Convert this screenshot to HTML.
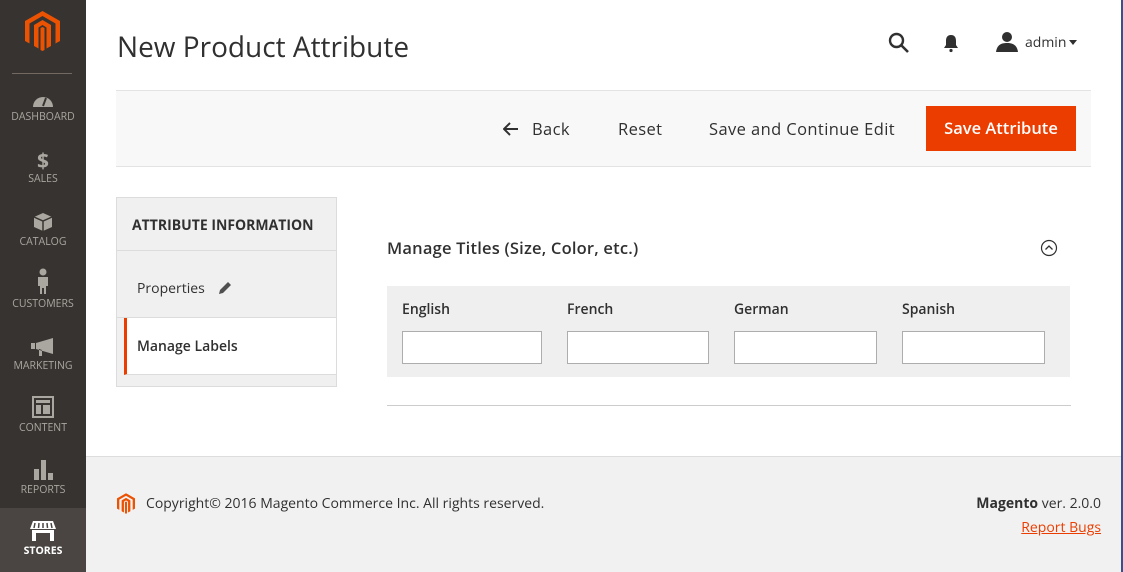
<!DOCTYPE html>
<html><head><meta charset="utf-8"><style>
*{box-sizing:border-box;margin:0;padding:0}
body{width:1123px;height:572px;overflow:hidden;background:#fff;font-family:"Open Sans","Liberation Sans",sans-serif;color:#303030;position:relative}
.side{position:absolute;left:0;top:0;width:86px;height:572px;background:#373330}
.side .sep{position:absolute;left:12px;top:73px;width:60px;height:1px;background:#736963}
.item{position:absolute;left:0;width:86px;text-align:center;color:#aaa6a0;font-size:10.5px}
.item svg{display:block;margin:0 auto 3px}
.item.act{background:#4a4542;color:#fff;height:64px;top:508px;padding-top:13px}
.main{position:absolute;left:86px;top:0;width:1035px;height:572px}
h1{position:absolute;left:31px;top:28px;font-size:28px;font-weight:400;color:#303030}
.bar{position:absolute;left:30px;top:90px;width:975px;height:77px;background:#f8f8f8;border-top:1px solid #e3e3e3;border-bottom:1px solid #e3e3e3}
.bar span{position:absolute;top:26px;font-size:16.5px;color:#303030;letter-spacing:.4px}
.btn{position:absolute;left:810px;top:15px;width:150px;height:45px;background:#eb3d00;color:#fff;font-size:16.5px;font-weight:600;text-align:center;line-height:44px}
.tabs{position:absolute;left:30px;top:197px;width:221px;height:190px;background:#f0f0f0;border:1px solid #dcdcdc}
.tabs .hd{height:53px;border-bottom:1px solid #dcdcdc;font-weight:700;font-size:14px;padding:18px 15px;color:#303030}
.tabs .p{height:67px;padding:28px 20px;font-size:14px;border-bottom:1px solid #dcdcdc}
.tabs .m{height:57px;margin-left:7px;background:#fff;border-left:3px solid #eb3d00;padding:19px 10px;font-size:14px;font-weight:600;border-bottom:1px solid #dcdcdc}
.sec{position:absolute;left:301px;top:236px;font-size:16.5px;font-weight:600;color:#303030;letter-spacing:.2px}
.grid{position:absolute;left:301px;top:286px;width:683px;height:91px;background:#efefef}
.grid label{position:absolute;top:14px;font-size:14px;font-weight:600;color:#303030}
.grid input{position:absolute;top:45px;height:33px;border:1px solid #adadad;background:#fff}
.hr{position:absolute;left:301px;top:405px;width:684px;height:1px;background:#ccc}
.foot{position:absolute;left:0;top:456px;width:1035px;height:116px;background:#f1f1f1;border-top:1px solid #ddd}
.rb{position:absolute;right:0;top:0;width:2px;height:572px;background:#3b4f8f}
</style></head><body>
<div class="side">
 <svg style="position:absolute;left:25px;top:11px" width="35" height="40" viewBox="0 0 35 40"><path d="M17.5 0 L35 10 V30 L30.5 32.5 V12.5 L17.5 5 L4.5 12.5 V32.5 L0 30 V10 Z M17.5 9 L26 14 V35 L21.5 37.5 V16.5 L17.5 14 L13.5 16.5 V37.5 L9 35 V14 Z" fill="#eb5202"/><path d="M15.5 17 L17.5 16 L19.5 17 V39 L17.5 40 L15.5 39 Z" fill="#eb5202"/></svg>
 <div class="sep"></div>
 <div class="item" style="top:93px"><svg width="22" height="14" viewBox="0 0 22 14"><path d="M1 14 A10 10 0 0 1 21 14 Z" fill="#aaa6a0"/><path d="M11 13 L14 5" stroke="#373330" stroke-width="2"/></svg>DASHBOARD</div>
 <div class="item" style="top:150px"><div style="font-size:21px;font-weight:700;line-height:22px;color:#aaa6a0">$</div>SALES</div>
 <div class="item" style="top:212px"><svg width="20" height="20" viewBox="0 0 20 20"><path d="M10 1 L19 5 V15 L10 19 L1 15 V5 Z" fill="#aaa6a0"/><path d="M1 5 L10 9 L19 5 M10 9 V19" stroke="#373330" stroke-width="1.5" fill="none"/></svg>CATALOG</div>
 <div class="item" style="top:268px"><svg width="14" height="26" viewBox="0 0 14 26"><circle cx="7" cy="4" r="3.5" fill="#aaa6a0"/><path d="M2 9 H12 V18 L10 18 V26 H8 V20 H6 V26 H4 V18 H2 Z" fill="#aaa6a0"/></svg>CUSTOMERS</div>
 <div class="item" style="top:338px"><svg width="24" height="18" viewBox="0 0 24 18"><rect x="0" y="5" width="4" height="6" fill="#aaa6a0"/><path d="M5 5 L22 0 V16 L5 11 Z M8 11 V18 H11 V12" fill="#aaa6a0"/></svg>MARKETING</div>
 <div class="item" style="top:396px"><svg width="22" height="22" viewBox="0 0 22 22"><rect x="1" y="1" width="20" height="20" fill="none" stroke="#aaa6a0" stroke-width="2"/><rect x="4" y="4" width="14" height="3" fill="#aaa6a0"/><rect x="4" y="9" width="5" height="9" fill="#aaa6a0"/><rect x="11" y="9" width="7" height="9" fill="#aaa6a0"/></svg>CONTENT</div>
 <div class="item" style="top:460px"><svg width="22" height="20" viewBox="0 0 22 20"><rect x="2" y="9" width="5" height="11" fill="#aaa6a0"/><rect x="9" y="0" width="5" height="20" fill="#aaa6a0"/><rect x="16" y="13" width="5" height="7" fill="#aaa6a0"/></svg>REPORTS</div>
 <div class="item act"><svg width="26" height="20" viewBox="0 0 26 20"><path d="M3 0 H23 L26 8 H0 Z" fill="#fff"/><path d="M5 2 L4 7 M9 2 L8.5 7 M13 2 V7 M17 2 L17.5 7 M21 2 L22 7" stroke="#4a4542" stroke-width="1.5"/><rect x="2" y="9" width="22" height="11" fill="#fff"/><rect x="6" y="12" width="14" height="8" fill="#4a4542"/></svg><b>STORES</b></div>
</div>
<div class="main">
 <h1>New Product Attribute</h1>
 <svg style="position:absolute;left:802px;top:32px" width="22" height="22" viewBox="0 0 22 22"><circle cx="8.5" cy="8.5" r="6.5" fill="none" stroke="#303030" stroke-width="2.4"/><path d="M13.5 13.5 L20 20" stroke="#303030" stroke-width="2.6"/></svg>
 <svg style="position:absolute;left:857px;top:34px" width="16" height="19" viewBox="0 0 16 19"><path d="M8 1 C4 1 3 4 3 7 V11 L1 14 H15 L13 11 V7 C13 4 12 1 8 1 Z" fill="#303030"/><circle cx="8" cy="16.5" r="1.6" fill="#303030"/></svg>
 <svg style="position:absolute;left:910px;top:31px" width="22" height="21" viewBox="0 0 22 21"><circle cx="11" cy="6" r="5" fill="#303030"/><path d="M0 21 C1 14 5 12 11 12 C17 12 21 14 22 21 Z" fill="#303030"/></svg>
 <div style="position:absolute;left:939px;top:33px;font-size:14px;color:#303030">admin</div>
 <div style="position:absolute;left:983px;top:40px;border:4px solid transparent;border-top:5px solid #303030"></div>
 <div class="bar">
  <svg style="position:absolute;left:387px;top:31px" width="16" height="14" viewBox="0 0 16 14"><path d="M15 7 H2 M7 1 L1 7 L7 13" stroke="#303030" stroke-width="2" fill="none"/></svg>
  <span style="left:416px">Back</span><span style="left:502px">Reset</span><span style="left:593px">Save and Continue Edit</span>
  <div class="btn">Save Attribute</div>
 </div>
 <div class="tabs">
  <div class="hd">ATTRIBUTE INFORMATION</div>
  <div class="p">Properties <svg style="margin-left:10px;vertical-align:-2px" width="14" height="14" viewBox="0 0 14 14"><path d="M1 13 L2 9 L10 1 L13 4 L5 12 Z" fill="#505050"/></svg></div>
  <div class="m">Manage Labels</div>
 </div>
 <div class="sec">Manage Titles (Size, Color, etc.)</div>
 <svg style="position:absolute;left:954px;top:239px" width="18" height="18" viewBox="0 0 18 18"><circle cx="9" cy="9" r="7.5" fill="none" stroke="#303030" stroke-width="1.2"/><path d="M5.5 10.5 L9 7 L12.5 10.5" fill="none" stroke="#303030" stroke-width="1.3"/></svg>
 <div class="grid">
  <label style="left:15px">English</label><label style="left:180px">French</label><label style="left:347px">German</label><label style="left:515px">Spanish</label>
  <input style="left:15px;width:140px"><input style="left:180px;width:142px"><input style="left:347px;width:143px"><input style="left:515px;width:143px">
 </div>
 <div class="hr"></div>
 <div class="foot">
  <svg style="position:absolute;left:31px;top:36px" width="18" height="21" viewBox="0 0 35 40"><path d="M17.5 0 L35 10 V30 L30.5 32.5 V12.5 L17.5 5 L4.5 12.5 V32.5 L0 30 V10 Z M17.5 9 L26 14 V35 L21.5 37.5 V16.5 L17.5 14 L13.5 16.5 V37.5 L9 35 V14 Z" fill="#eb5202"/><path d="M15.5 17 L17.5 16 L19.5 17 V39 L17.5 40 L15.5 39 Z" fill="#eb5202"/></svg>
  <div style="position:absolute;left:60px;top:37px;font-size:14px;color:#303030">Copyright© 2016 Magento Commerce Inc. All rights reserved.</div>
  <div style="position:absolute;right:20px;top:37px;font-size:14px;color:#303030"><b>Magento</b> ver. 2.0.0</div>
  <div style="position:absolute;right:20px;top:61px;font-size:14px;color:#eb3d00;text-decoration:underline">Report Bugs</div>
 </div>
</div>
<div class="rb"></div>
</body></html>
